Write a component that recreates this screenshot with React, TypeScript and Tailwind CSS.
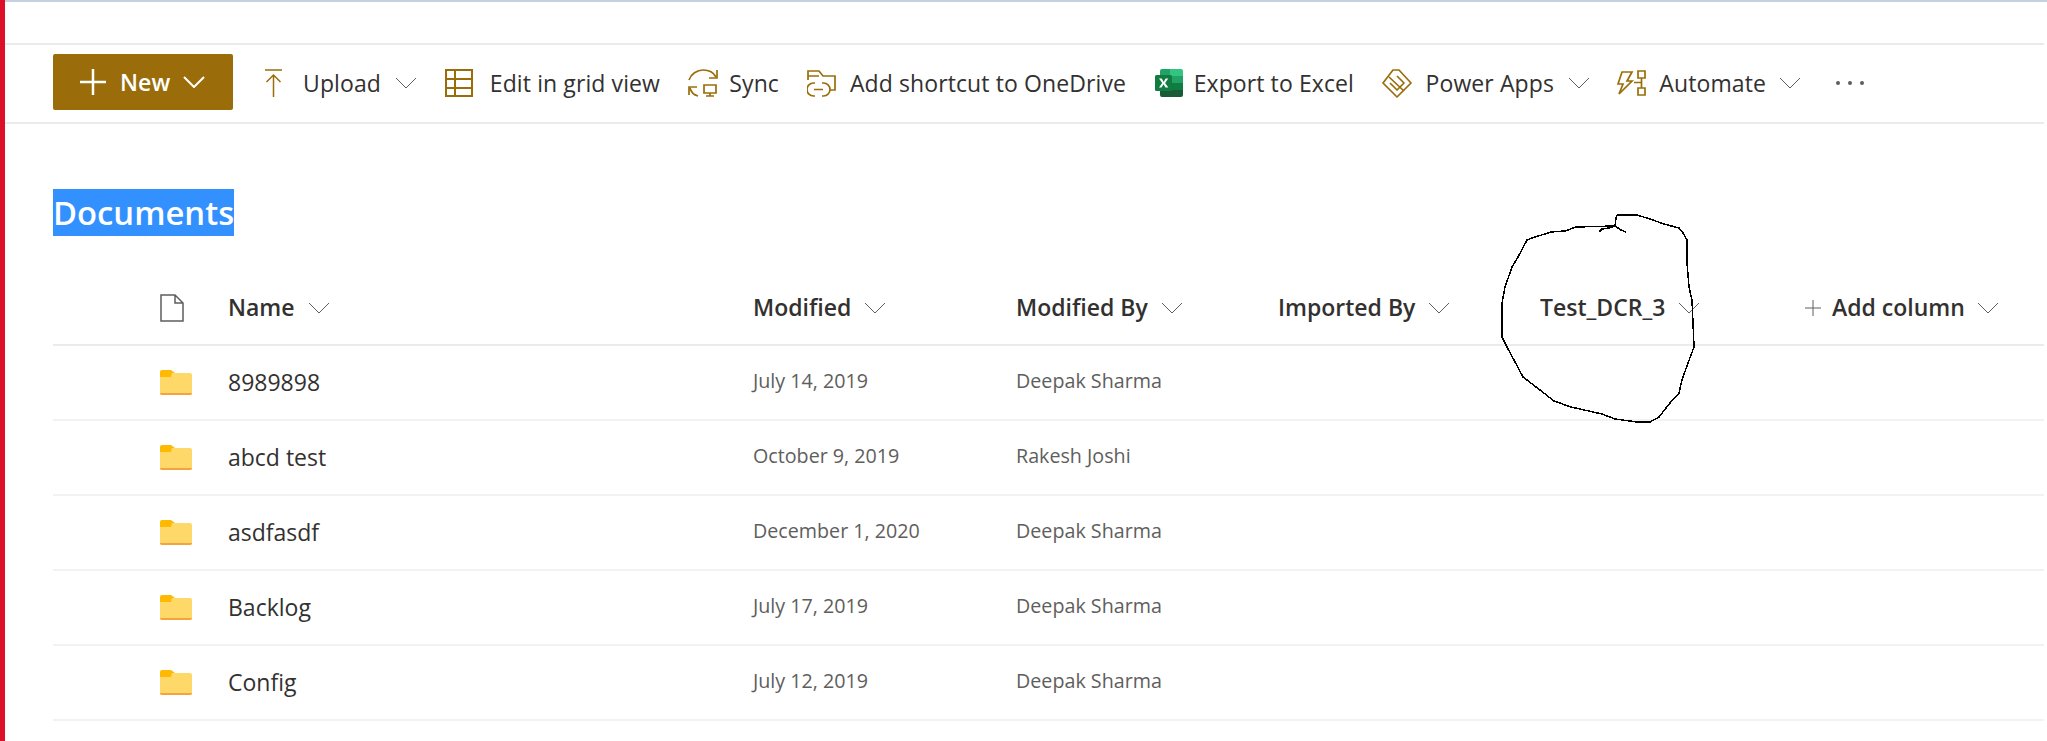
import type { ReactNode } from 'react';

const GOLD = '#9a6d0a';

const UploadIcon = () => (
  <svg width="18" height="28" viewBox="0 0 18 28" fill="none" stroke={GOLD} strokeWidth="1.5">
    <path d="M0 1h17M8.500 28V6M1.500 13l7-7 7 7" />
  </svg>
);

const GridIcon = () => (
  <svg width="28" height="28" viewBox="0 0 28 28" fill="none" stroke={GOLD} strokeWidth="2">
    <path d="M1 1h26v26H1zM1 10h26M1 19h26M10 1v26" />
  </svg>
);

const SyncIcon = () => (
  <svg width="30" height="28" viewBox="0 0 30 28" fill="none" stroke={GOLD} strokeWidth="1.7">
    <path d="M1 11C3 5 9 1 15 1c6 0 11 3 13 7" />
    <path d="M29 1v8h-8" />
    <path d="M2 19c1 4 4 7 8 8" />
    <path d="M1 26v-8h8" />
    <path d="M16 16h12v8H16zM22 24v3M18 27h8" />
  </svg>
);

const ShortcutIcon = () => (
  <svg width="29" height="27" viewBox="0 0 29 27" fill="none" stroke={GOLD} strokeWidth="1.7">
    <path d="M1 10V1h11l4 5h12v14h-5M1 6h11" />
    <path d="M8 13H6.500a6.500 6.500 0 0 0 0 13H8M15 13h1.500a6.500 6.500 0 0 1 0 13H15M7 19.500h9" />
  </svg>
);

const ExcelIcon = () => (
  <svg width="28" height="28" viewBox="0 0 28 28">
    <path d="M7 0h8v7H5V2a2 2 0 0 1 2-2z" fill="#21a366" />
    <path d="M15 0h11a2 2 0 0 1 2 2v5H15z" fill="#33c481" />
    <path d="M5 7h10v7H5z" fill="#107c41" />
    <path d="M15 7h13v7H15z" fill="#21a366" />
    <path d="M5 14h10v7H5z" fill="#185c37" />
    <path d="M15 14h13v7H15z" fill="#107c41" />
    <path d="M5 21h23v5a2 2 0 0 1-2 2H7a2 2 0 0 1-2-2z" fill="#185c37" />
    <rect x="0" y="6" width="17" height="16" rx="1.500" fill="#107c41" />
    <path d="M4 9.500h2.800l1.900 3.400 1.900-3.400h2.600l-3.100 4.600 3.200 4.400h-2.800l-2-3.300-2 3.300H4l3.200-4.500z" fill="#fff" />
  </svg>
);

const PowerAppsIcon = () => (
  <svg width="30" height="30" viewBox="0 0 30 30" fill="none" stroke={GOLD} strokeWidth="1.700" strokeLinejoin="round">
    <path d="M11 2h6l12 13-14 14L1 15z" />
    <path d="M7 9l15 14M15 8l7 7-7 7-7-7" />
  </svg>
);

const AutomateIcon = () => (
  <svg width="30" height="26" viewBox="0 0 30 26" fill="none" stroke={GOLD} strokeWidth="1.700">
    <path d="M5 2h10l-5 9h5L2 24l4-10H1z" />
    <path d="M21 1h7v7h-7zM21 18h7v7h-7zM24.500 8v10M17 12.500h7.500" />
  </svg>
);

const FolderIcon = () => (
  <svg width="32" height="25" viewBox="0 0 32 25">
    <path d="M0 2a2 2 0 0 1 2-2h9l4 3-3 4H0z" fill="#ffb900" />
    <path d="M12 3h18a2 2 0 0 1 2 2v18a2 2 0 0 1-2 2H2a2 2 0 0 1-2-2V7h11z" fill="#ffd86a" />
    <path d="M0 23h32a2 2 0 0 1-2 2H2a2 2 0 0 1-2-2z" fill="#f5a33c" />
  </svg>
);

const DocIcon = () => (
  <svg width="24" height="28" viewBox="0 0 24 28" fill="none" stroke="#605e5c" strokeWidth="1.500">
    <path d="M1 1h14l8 8v18H1zM15 1v8h8" />
  </svg>
);

const Chevron = ({ className = '', color = '#605e5c', weight = 1 }: { className?: string; color?: string; weight?: number }) => (
  <svg className={`shrink-0 ${className}`} width="22" height="12" viewBox="0 0 22 12" fill="none" stroke={color} strokeWidth={weight}>
    <path d="M1 1l10 10L21 1" />
  </svg>
);

// hand drawn ring, traced from the picture
const ring = [
  [1617, 215], [1637, 215], [1650, 219], [1664, 224], [1679, 228], [1683, 233], [1687, 240],
  [1687, 263], [1689, 287], [1692, 300], [1693, 323], [1694, 347], [1688, 363], [1682, 380],
  [1679, 393], [1670, 403], [1659, 417], [1650, 422], [1637, 422], [1615, 419], [1602, 414],
  [1571, 407], [1554, 401], [1540, 390], [1523, 377], [1514, 360], [1507, 347], [1502, 337],
  [1502, 303], [1505, 287], [1512, 267], [1518, 257], [1527, 240], [1532, 238], [1551, 232],
  [1565, 231], [1576, 227], [1615, 226], [1616, 218], [1617, 215],
];

const Tool = ({ icon, label, className }: { icon: ReactNode; label: string; className: string }) => (
  <div className={`flex items-center shrink-0 ${className}`}>
    {icon}
    <span className="ml-auto whitespace-nowrap text-[#323130]">{label}</span>
  </div>
);

const HeaderCell = ({ label }: { label: string }) => (
  <div className="flex items-center gap-[13px] font-semibold text-[23px] text-[#323130]">
    <span>{label}</span>
    <Chevron />
  </div>
);

const files = [
  { name: '8989898', date: 'July 14, 2019', by: 'Deepak Sharma' },
  { name: 'abcd test', date: 'October 9, 2019', by: 'Rakesh Joshi' },
  { name: 'asdfasdf', date: 'December 1, 2020', by: 'Deepak Sharma' },
  { name: 'Backlog', date: 'July 17, 2019', by: 'Deepak Sharma' },
  { name: 'Config', date: 'July 12, 2019', by: 'Deepak Sharma' },
];

const columns = 'grid grid-cols-[68px_525px_263px_262px_262px_262px_1fr] items-center pl-[107px]';

export default function App() {
  return (
    <div className="relative h-[741px] w-[2047px] overflow-hidden bg-white font-['Open_Sans',sans-serif]">
      <div className="h-[2px] bg-[#c5d0e3]" />
      <div className="absolute left-0 top-0 h-full w-[5px] bg-[#dc1028]" />

      <div className="ml-[5px] mr-[3px] mt-[41px] flex h-[81px] items-center border-y-2 border-[#edebe9] pb-[1px] pl-[48px] text-[23px] tracking-[0.1px]">
        <button className="-mt-[2px] flex h-[56px] w-[180px] items-center rounded-[2px] bg-[#9a6d0a] pl-[27px] font-semibold text-white">
          <svg width="26" height="26" viewBox="0 0 26 26" fill="none" stroke="#fff" strokeWidth="2.500">
            <path d="M13 0v26M0 13h26" />
          </svg>
          <span className="ml-[14px]">New</span>
          <Chevron className="ml-[13px]" color="#fff" weight={2} />
        </button>
        <Tool icon={<UploadIcon />} label="Upload" className="ml-[32px] w-[116px]" />
        <Chevron className="ml-[14px]" />
        <Tool icon={<GridIcon />} label="Edit in grid view" className="ml-[28px] w-[215px]" />
        <Tool icon={<SyncIcon />} label="Sync" className="ml-[28px] w-[91px]" />
        <Tool icon={<ShortcutIcon />} label="Add shortcut to OneDrive" className="ml-[28px] w-[319px]" />
        <Tool icon={<ExcelIcon />} label="Export to Excel" className="ml-[29px] w-[199px]" />
        <Tool icon={<PowerAppsIcon />} label="Power Apps" className="ml-[28px] w-[172px]" />
        <Chevron className="ml-[14px]" />
        <Tool icon={<AutomateIcon />} label="Automate" className="ml-[27px] w-[149px]" />
        <Chevron className="ml-[13px]" />
        <div className="ml-[35px] flex gap-[8px]">
          <span className="size-[4px] rounded-full bg-[#605e5c]" />
          <span className="size-[4px] rounded-full bg-[#605e5c]" />
          <span className="size-[4px] rounded-full bg-[#605e5c]" />
        </div>
      </div>

      <div className="ml-[53px] mr-[3px] pt-[65px]">
        <h1 className="w-fit bg-[#3390ff] text-[32.800px] leading-[47px] font-semibold text-white">Documents</h1>

        <div className={`${columns} mt-[35px] h-[75px] border-b-2 border-[#edebe9]`}>
          <DocIcon />
          <HeaderCell label="Name" />
          <HeaderCell label="Modified" />
          <HeaderCell label="Modified By" />
          <HeaderCell label="Imported By" />
          <HeaderCell label="Test_DCR_3" />
          <div className="flex items-center pl-[3px] font-semibold text-[23px] text-[#323130]">
            <svg width="16" height="16" viewBox="0 0 16 16" fill="none" stroke="#605e5c" strokeWidth="1">
              <path d="M8 0v16M0 8h16" />
            </svg>
            <span className="ml-[11px]">Add column</span>
            <Chevron className="ml-[12px]" />
          </div>
        </div>

        {files.map((file) => (
          <div key={file.name} className={`${columns} h-[75px] border-b-2 border-[#f3f2f1]`}>
            <FolderIcon />
            <span className="text-[23px] text-[#323130]">{file.name}</span>
            <span className="-mt-[3px] text-[19.700px] text-[#605e5c]">{file.date}</span>
            <span className="-mt-[3px] text-[19.700px] text-[#605e5c]">{file.by}</span>
          </div>
        ))}
      </div>

      <svg className="pointer-events-none absolute left-0 top-0" width="2047" height="741" fill="none" stroke="#000" strokeWidth="1.500" shapeRendering="crispEdges">
        <polyline points={ring.map((p) => p.join(',')).join(' ')} />
        <path d="M1599 232l3-3 7-1 6-2 6 4 5 2" />
      </svg>
    </div>
  );
}
